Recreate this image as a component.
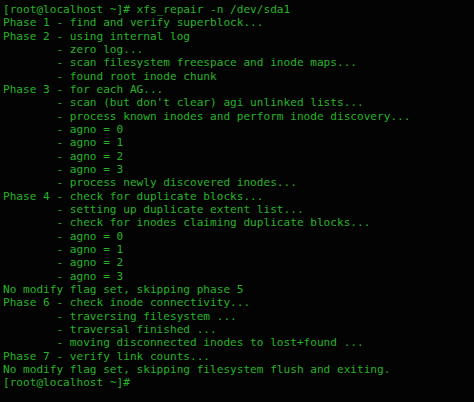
const lines: string[] = [
  "[root@localhost ~]# xfs_repair -n /dev/sda1",
  "Phase 1 - find and verify superblock...",
  "Phase 2 - using internal log",
  "        - zero log...",
  "        - scan filesystem freespace and inode maps...",
  "        - found root inode chunk",
  "Phase 3 - for each AG...",
  "        - scan (but don't clear) agi unlinked lists...",
  "        - process known inodes and perform inode discovery...",
  "        - agno = 0",
  "        - agno = 1",
  "        - agno = 2",
  "        - agno = 3",
  "        - process newly discovered inodes...",
  "Phase 4 - check for duplicate blocks...",
  "        - setting up duplicate extent list...",
  "        - check for inodes claiming duplicate blocks...",
  "        - agno = 0",
  "        - agno = 1",
  "        - agno = 2",
  "        - agno = 3",
  "No modify flag set, skipping phase 5",
  "Phase 6 - check inode connectivity...",
  "        - traversing filesystem ...",
  "        - traversal finished ...",
  "        - moving disconnected inodes to lost+found ...",
  "Phase 7 - verify link counts...",
  "No modify flag set, skipping filesystem flush and exiting.",
  "[root@localhost ~]#",
];

export default function App() {
  return (
    <div className="w-[474px] h-[402px] overflow-hidden bg-[#030303] pl-[3px] pt-[3px]">
      <pre className="font-['DejaVu_Sans_Mono',monospace] text-[11.1px] leading-[13.33px] text-[#27b327]">
        {lines.map((l, i) => (
          <div key={i}>{l}</div>
        ))}
      </pre>
    </div>
  );
}
